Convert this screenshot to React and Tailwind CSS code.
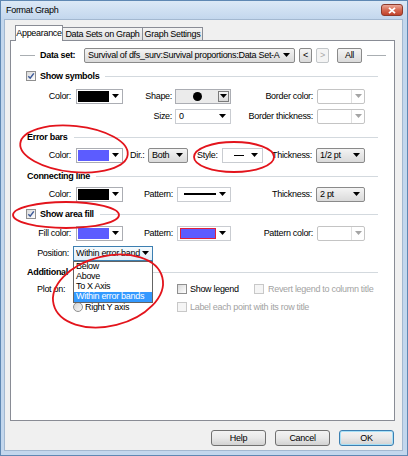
import React from "react";

const fontCls = "font-['Liberation_Sans',Arial,sans-serif]";

function Arrow({ gray }) {
  return (
    <svg width="7" height="4" viewBox="0 0 7 4" className="shrink-0">
      <path d="M0 0h7L3.5 4z" fill={gray ? "#a5a5a5" : "#000"} />
    </svg>
  );
}

function Check({ checked, disabled }) {
  return (
    <span
      className={`flex h-[10px] w-[10px] shrink-0 items-center justify-center border ${
        disabled ? "border-[#c8c8c8] bg-[#f5f5f5]" : "border-[#8f8f8f] bg-linear-to-br from-[#d9d9d9] to-white"
      }`}
    >
      {checked && (
        <svg width="8" height="8" viewBox="0 0 8 8">
          <path d="M1.3 4.2L3.2 6.2L6.8 1.4" fill="none" stroke="#3d5a98" strokeWidth="1.5" />
        </svg>
      )}
    </span>
  );
}

function Radio({ checked }) {
  return (
    <span className="flex h-[10px] w-[10px] shrink-0 items-center justify-center rounded-full border border-[#8f8f8f] bg-linear-to-br from-[#d4d4d4] to-[#f7f7f7]">
      {checked && <span className="h-[4px] w-[4px] rounded-full bg-[#2c4f8f]" />}
    </span>
  );
}

function Label({ w, children }) {
  return <span className={`shrink-0 whitespace-nowrap text-right ${w}`}>{children}</span>;
}

function ColorCombo({ swatch }) {
  return (
    <div className="flex h-[15px] w-[47px] shrink-0 items-center border border-[#abadb3] bg-white">
      <span className={`ml-[1px] h-[11px] w-[31px] ${swatch}`} />
      <span className="flex flex-1 justify-center">
        <Arrow />
      </span>
    </div>
  );
}

function WhiteCombo({ w, children }) {
  return (
    <div className={`flex h-[15px] shrink-0 items-center border border-[#c9ccd1] bg-white pl-[3px] pr-[4px] ${w}`}>
      <span className="flex flex-1 items-center">{children}</span>
      <Arrow />
    </div>
  );
}

function GrayCombo({ w, children }) {
  return (
    <div
      className={`flex h-[15px] shrink-0 items-center rounded-[2px] border border-[#8a8a8a] bg-linear-to-b from-[#f4f4f4] to-[#dadada] pl-[3px] pr-[4px] ${w}`}
    >
      <span className="flex-1 overflow-hidden whitespace-nowrap">{children}</span>
      <Arrow />
    </div>
  );
}

function DisabledCombo() {
  return (
    <div className="flex h-[15px] w-[48px] shrink-0 items-center rounded-[2px] border border-[#c4c4c4] bg-white">
      <span className="flex-1" />
      <span className="flex h-full w-[13px] items-center justify-center border-l border-[#e0e0e0]">
        <Arrow gray />
      </span>
    </div>
  );
}

function Header({ check, children }) {
  return (
    <div className={`flex h-[14px] items-center pr-[16px] ${check ? "pl-[15px]" : "pl-[16px]"}`}>
      {check && (
        <span className="mr-[4px]">
          <Check checked />
        </span>
      )}
      <span className="whitespace-nowrap font-bold">{children}</span>
      <span className="ml-[6px] h-px flex-1 bg-[#d3d9de]" />
    </div>
  );
}

function NavButton({ w, disabled, children }) {
  return (
    <span
      className={`flex h-[15px] shrink-0 items-center justify-center rounded-[2px] border ${w} ${
        disabled
          ? "border-[#c2c6c9] bg-[#f4f4f4] text-[#a8a8a8]"
          : "border-[#8a8a8a] bg-linear-to-b from-[#f4f4f4] to-[#dadada]"
      }`}
    >
      {children}
    </span>
  );
}

function DialogButton({ focused, children }) {
  return (
    <button
      className={`flex h-[16px] w-[55px] items-center justify-center rounded-[3px] border bg-linear-to-b from-[#f3f3f3] via-[#e8e8e8] to-[#d2d2d2] ${
        focused ? "border-[#3c7fb1] shadow-[inset_0_0_0_1px_#a6e0f7]" : "border-[#707070]"
      }`}
    >
      {children}
    </button>
  );
}

const positions = ["Below", "Above", "To X Axis", "Within error bands"];

export default function App() {
  return (
    <div
      className={`relative flex h-[456px] w-[408px] flex-col overflow-hidden border border-[#5f88b3] bg-[#c3d7ed] text-[9px] leading-none tracking-[-0.3px] text-black ${fontCls}`}
    >
      <div className="flex h-[18px] shrink-0 items-center justify-between bg-linear-to-b from-[#dce9f6] to-[#c3d7ed] pl-[5px] pr-[4px]">
        <span className="text-[9px]">Format Graph</span>
        <span className="flex h-[12px] w-[22px] items-center justify-center rounded-[3px] border border-[#8d3b2c] bg-linear-to-b from-[#eaa898] via-[#d66a52] to-[#c0412a]">
          <svg width="8" height="7" viewBox="0 0 8 7">
            <path d="M1 0.8L7 6.2M7 0.8L1 6.2" stroke="#fff" strokeWidth="1.8" />
          </svg>
        </span>
      </div>

      <div className="mb-[4px] ml-[3px] mr-[4px] flex flex-1 flex-col border border-[#a3b8d0] bg-[#f0f0f0] pl-[5px] pt-[5px]">
        <div className="flex h-[15px] items-end pl-[5px]">
          <span className="relative z-10 -mb-px flex h-[16px] w-[48px] items-center justify-center border border-b-0 border-[#898c95] bg-white">
            Appearance
          </span>
          <span className="-ml-px flex h-[13px] w-[81px] items-center justify-center border border-b-0 border-[#898c95] bg-linear-to-b from-[#f3f3f3] to-[#e1e1e1]">
            Data Sets on Graph
          </span>
          <span className="-ml-px flex h-[13px] w-[61px] items-center justify-center border border-b-0 border-[#898c95] bg-linear-to-b from-[#f3f3f3] to-[#e1e1e1]">
            Graph Settings
          </span>
        </div>

        <div className="relative flex h-[381px] w-[385px] flex-col border border-[#898c95] bg-white">
          {/* Data set */}
          <div className="mt-[6px] flex h-[16px] items-center">
            <span className="ml-[9px] h-px w-[15px] bg-[#a9aeb2]" />
            <span className="ml-[5px] w-[42px] shrink-0 whitespace-nowrap font-bold">Data set:</span>
            <span className="ml-[2px]">
              <GrayCombo w="w-[211px]">Survival of dfs_surv:Survival proportions:Data Set-A</GrayCombo>
            </span>
            <span className="ml-[4px]">
              <NavButton w="w-[13px]">&lt;</NavButton>
            </span>
            <span className="ml-[4px]">
              <NavButton w="w-[13px]" disabled>
                &gt;
              </NavButton>
            </span>
            <span className="ml-[8px]">
              <NavButton w="w-[25px]">All</NavButton>
            </span>
            <span className="ml-[5px] h-px w-[19px] bg-[#a9aeb2]" />
          </div>

          {/* Show symbols */}
          <div className="mt-[6px]">
            <Header check>Show symbols</Header>
          </div>
          <div className="mt-[5px] flex h-[16px] items-center">
            <Label w="w-[60px]">Color:</Label>
            <span className="ml-[5px]">
              <ColorCombo swatch="bg-black" />
            </span>
            <Label w="w-[49px]">Shape:</Label>
            <div className="ml-[3px] flex h-[15px] w-[56px] shrink-0 items-center border border-[#abadb3] bg-[#ebebeb]">
              <span className="flex flex-1 justify-center">
                <span className="h-[9px] w-[9px] rounded-full bg-black" />
              </span>
              <span className="mr-px flex h-[11px] w-[11px] items-center justify-center border border-[#7a7a7a] bg-linear-to-b from-[#f6f6f6] to-[#d8d8d8]">
                <Arrow />
              </span>
            </div>
            <Label w="w-[82px]">Border color:</Label>
            <span className="ml-[4px]">
              <DisabledCombo />
            </span>
          </div>
          <div className="mt-[4px] flex h-[16px] items-center">
            <span className="w-[112px] shrink-0" />
            <Label w="w-[49px]">Size:</Label>
            <span className="ml-[3px]">
              <WhiteCombo w="w-[56px]">0</WhiteCombo>
            </span>
            <Label w="w-[82px]">Border thickness:</Label>
            <span className="ml-[4px]">
              <DisabledCombo />
            </span>
          </div>

          {/* Error bars */}
          <div className="mt-[6px]">
            <Header>Error bars</Header>
          </div>
          <div className="mt-[3px] flex h-[16px] items-center">
            <Label w="w-[60px]">Color:</Label>
            <span className="ml-[5px]">
              <ColorCombo swatch="bg-[#5c5cff]" />
            </span>
            <span className="ml-[7px] w-[18px] shrink-0">Dir.:</span>
            <GrayCombo w="w-[40px]">Both</GrayCombo>
            <span className="ml-[9px] w-[21px] shrink-0">Style:</span>
            <span className="ml-[4px]">
              <WhiteCombo w="w-[41px]">
                <span className="ml-[8px] h-px w-[10px] bg-black" />
              </WhiteCombo>
            </span>
            <Label w="w-[49px]">Thickness:</Label>
            <span className="ml-[4px]">
              <GrayCombo w="w-[49px]">1/2 pt</GrayCombo>
            </span>
          </div>

          {/* Connecting line */}
          <div className="mt-[6px]">
            <Header>Connecting line</Header>
          </div>
          <div className="mt-[3px] flex h-[16px] items-center">
            <Label w="w-[60px]">Color:</Label>
            <span className="ml-[5px]">
              <ColorCombo swatch="bg-black" />
            </span>
            <Label w="w-[50px]">Pattern:</Label>
            <span className="ml-[4px]">
              <WhiteCombo w="w-[54px]">
                <span className="ml-[3px] h-[2px] w-[32px] bg-black" />
              </WhiteCombo>
            </span>
            <Label w="w-[81px]">Thickness:</Label>
            <span className="ml-[4px]">
              <GrayCombo w="w-[49px]">2 pt</GrayCombo>
            </span>
          </div>

          {/* Area fill */}
          <div className="mt-[5px]">
            <Header check>Show area fill</Header>
          </div>
          <div className="mt-[4px] flex h-[16px] items-center">
            <Label w="w-[60px]">Fill color:</Label>
            <span className="ml-[5px]">
              <ColorCombo swatch="bg-[#5c5cff]" />
            </span>
            <Label w="w-[50px]">Pattern:</Label>
            <div className="ml-[4px] flex h-[15px] w-[54px] shrink-0 items-center border border-[#c9ccd1] bg-white pl-[2px] pr-[4px]">
              <span className="h-[11px] w-[36px] border border-[#e0203a] bg-[#5c5cff]" />
              <span className="flex flex-1 justify-end">
                <Arrow />
              </span>
            </div>
            <Label w="w-[82px]">Pattern color:</Label>
            <span className="ml-[4px]">
              <DisabledCombo />
            </span>
          </div>
          <div className="relative z-20 mt-[4px] flex h-[16px] items-center">
            <Label w="w-[58px]">Position:</Label>
            <div className="relative ml-[4px]">
              <div className="flex h-[15px] w-[80px] items-center border border-[#3c7fb1] bg-linear-to-b from-[#f6fbfe] to-[#e2eff8] pl-[2px] pr-[3px]">
                <span className="flex-1 overflow-hidden whitespace-nowrap">Within error band</span>
                <Arrow />
              </div>
              <div className="absolute left-0 top-full flex w-[80px] flex-col border border-[#646464] bg-white">
                {positions.map((p, i) => (
                  <span
                    key={p}
                    className={`flex h-[10px] items-center whitespace-nowrap pl-[2px] ${
                      i === positions.length - 1 ? "bg-[#3399ff] text-white" : ""
                    }`}
                  >
                    {p}
                  </span>
                ))}
              </div>
            </div>
          </div>

          {/* Additional options (partly hidden by the open list) */}
          <div className="mt-[4px]">
            <Header>Additional</Header>
          </div>
          <div className="mt-[3px] flex h-[14px] items-center">
            <span className="w-[62px] shrink-0 pl-[26px]">Plot on:</span>
            <span className="flex w-[104px] shrink-0 items-center">
              <Radio checked />
            </span>
            <span className="flex w-[77px] shrink-0 items-center">
              <Check />
              <span className="ml-[3px]">Show legend</span>
            </span>
            <span className="flex items-center text-[#a2a2a2]">
              <Check disabled />
              <span className="ml-[4px] whitespace-nowrap">Revert legend to column title</span>
            </span>
          </div>
          <div className="mt-[4px] flex h-[14px] items-center">
            <span className="w-[62px] shrink-0" />
            <span className="flex w-[104px] shrink-0 items-center">
              <Radio />
              <span className="ml-[2px]">Right Y axis</span>
            </span>
            <span className="flex items-center text-[#a2a2a2]">
              <Check disabled />
              <span className="ml-[3px] whitespace-nowrap">Label each point with its row title</span>
            </span>
          </div>
        </div>

        <div className="mt-[9px] flex w-[385px] justify-end gap-[9px] pr-px">
          <DialogButton>Help</DialogButton>
          <DialogButton>Cancel</DialogButton>
          <DialogButton focused>OK</DialogButton>
        </div>
      </div>

      <svg className="pointer-events-none absolute left-[-1px] top-[-1px] z-30" width="408" height="456" viewBox="0 0 408 456">
        <g fill="none" stroke="#e3141c" strokeWidth="1.8">
          <ellipse cx="74" cy="149" rx="54" ry="23" transform="rotate(6 74 149)" />
          <ellipse cx="234" cy="157" rx="40" ry="15" />
          <ellipse cx="66" cy="215" rx="53" ry="13" />
          <ellipse cx="108" cy="291" rx="56" ry="35" transform="rotate(-14 108 291)" />
        </g>
      </svg>
    </div>
  );
}
